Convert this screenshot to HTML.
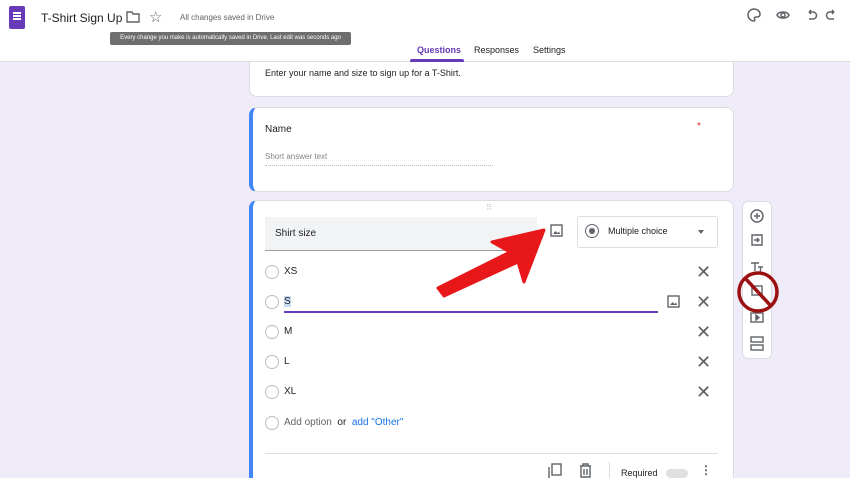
<!DOCTYPE html>
<html style="overflow:hidden;width:850px;height:478px"><head><style>
*{margin:0;padding:0;box-sizing:border-box}
body{width:850px;height:478px;overflow:hidden;background:#f0ebf8;font-family:"Liberation Sans",Arial,sans-serif;position:relative;color:#202124}
.hdr{position:absolute;left:0;top:0;width:850px;height:62px;background:#fff;border-bottom:1px solid #ddd;z-index:5}
.abs{position:absolute}
.card{position:absolute;background:#fff;border-radius:8px;border:1px solid #dadce0}
.x{position:absolute;font-size:18px;color:#5f6368;line-height:18px}
.radio{position:absolute;width:14px;height:14px;border:1px solid #bdbdbd;border-radius:50%}
.opt{position:absolute;font-size:10px;color:#202124}
</style></head><body>
<div class="hdr">
  <div class="abs" style="left:9px;top:6px;width:16px;height:23px;background:#673ab7;border-radius:2px"></div>
  <div class="abs" style="left:13px;top:12px;width:8px;height:1.5px;background:#fff;box-shadow:0 3px 0 #fff,0 6px 0 #fff"></div>
  <div class="abs" style="left:41px;top:11px;font-size:12px;color:#202124">T-Shirt Sign Up</div>
  <svg class="abs" style="left:126px;top:11px" width="14" height="12" viewBox="0 0 14 12"><path d="M1 1h5l1 2h6v8H1z" fill="none" stroke="#5f6368" stroke-width="1.4"/></svg>
  <div class="abs" style="left:149px;top:8px;font-size:15px;color:#5f6368">☆</div>
  <div class="abs" style="left:180px;top:13px;font-size:8px;color:#5f6368">All changes saved in Drive</div>
  <div class="abs" style="left:110px;top:32px;width:241px;height:13px;background:#6e6e6e;border-radius:2px;color:#fff;font-size:6px;line-height:13px;text-align:center">Every change you make is automatically saved in Drive. Last edit was seconds ago</div>
  <div class="abs" style="left:417px;top:45px;font-size:9px;color:#673ab7;font-weight:bold">Questions</div>
  <div class="abs" style="left:410px;top:59px;width:54px;height:3px;background:#673ab7;border-radius:2px 2px 0 0"></div>
  <div class="abs" style="left:474px;top:45px;font-size:9px;color:#202124">Responses</div>
  <div class="abs" style="left:533px;top:45px;font-size:9px;color:#202124">Settings</div>
  <svg class="abs" style="left:746px;top:7px" width="90" height="16" viewBox="0 0 90 16" fill="none" stroke="#5f6368" stroke-width="1.5">
    <path d="M8 2a6 6 0 1 0 0 12c1 0 1-1 .5-2s0-2 1.5-2h2a3 3 0 0 0 2-3C14 4 11 2 8 2z"/>
    <path d="M31 8c2-4 10-4 12 0c-2 4-10 4-12 0z"/><circle cx="37" cy="8" r="2"/>
    <path d="M63 5h4a3 3 0 0 1 0 7h-4M63 5l2-2M63 5l2 2"/>
    <path d="M88 5h-4a3 3 0 0 0 0 7h4M88 5l-2-2M88 5l-2 2"/>
  </svg>
</div>
<div class="card" style="left:249px;top:50px;width:485px;height:47px;border-top:none;border-radius:0 0 8px 8px"></div>
<div class="abs" style="left:265px;top:68px;font-size:9px">Enter your name and size to sign up for a T-Shirt.</div>

<div class="card" style="left:249px;top:107px;width:485px;height:85px;border-left:4px solid #4285f4"></div>
<div class="abs" style="left:265px;top:124px;font-size:10px">Name</div>
<div class="abs" style="left:697px;top:121px;font-size:10px;color:#d93025">*</div>
<div class="abs" style="left:265px;top:152px;font-size:8px;color:#80868b">Short answer text</div>
<div class="abs" style="left:265px;top:165px;width:228px;border-top:1px dotted #bdbdbd"></div>

<div class="card" style="left:249px;top:200px;width:485px;height:290px;border-left:4px solid #4285f4;border-radius:8px 8px 0 0"></div>
<div class="abs" style="left:486px;top:203px;font-size:8px;color:#bbb;letter-spacing:-1px">⠿</div>
<div class="abs" style="left:265px;top:217px;width:272px;height:34px;background:#f1f3f4;border-bottom:1px solid #9e9e9e"></div>
<div class="abs" style="left:275px;top:228px;font-size:10px">Shirt size</div>
<svg class="abs" style="left:550px;top:224px" width="13" height="13" viewBox="0 0 13 13"><rect x="1" y="1" width="11" height="11" fill="none" stroke="#5f6368" stroke-width="1.4"/><path d="M3 10l2.5-3 2 2 1.5-1.5L10 10z" fill="#5f6368"/></svg>
<div class="abs" style="left:577px;top:216px;width:141px;height:32px;border:1px solid #dadce0;border-radius:3px"></div>
<div class="abs" style="left:585px;top:224px;width:14px;height:14px;border:1.5px solid #5f6368;border-radius:50%"></div>
<div class="abs" style="left:589px;top:228px;width:6px;height:6px;background:#5f6368;border-radius:50%"></div>
<div class="abs" style="left:608px;top:226px;font-size:9px">Multiple choice</div>
<div class="abs" style="left:698px;top:230px;border:3px solid transparent;border-top:4px solid #5f6368"></div>

<div class="radio" style="left:265px;top:265px"></div><div class="opt" style="left:284px;top:266px">XS</div><div class="x" style="left:696px;top:263px">✕</div>
<div class="radio" style="left:265px;top:295px"></div><div class="opt" style="left:284px;top:296px;background:#c8dcf5">S</div><div class="x" style="left:696px;top:293px">✕</div>
<div class="abs" style="left:284px;top:311px;width:374px;height:2px;background:#673ab7"></div>
<svg class="abs" style="left:667px;top:295px" width="13" height="13" viewBox="0 0 13 13"><rect x="1" y="1" width="11" height="11" fill="none" stroke="#5f6368" stroke-width="1.4"/><path d="M3 10l2.5-3 2 2 1.5-1.5L10 10z" fill="#5f6368"/></svg>
<div class="radio" style="left:265px;top:325px"></div><div class="opt" style="left:284px;top:326px">M</div><div class="x" style="left:696px;top:323px">✕</div>
<div class="radio" style="left:265px;top:355px"></div><div class="opt" style="left:284px;top:356px">L</div><div class="x" style="left:696px;top:353px">✕</div>
<div class="radio" style="left:265px;top:385px"></div><div class="opt" style="left:284px;top:386px">XL</div><div class="x" style="left:696px;top:383px">✕</div>
<div class="radio" style="left:265px;top:416px"></div><div class="opt" style="left:284px;top:417px;color:#5f6368">Add option <span style="color:#202124">&nbsp;or&nbsp;</span> <span style="color:#1a73e8">add "Other"</span></div>
<div class="abs" style="left:265px;top:453px;width:453px;border-top:1px solid #e0e0e0"></div>
<svg class="abs" style="left:548px;top:463px" width="50" height="15" viewBox="0 0 50 15" fill="none" stroke="#5f6368" stroke-width="1.4"><rect x="4" y="1" width="9" height="11"/><path d="M1 4v11"/><path d="M32 3h11M35 3V1h5v2M33 3v11h9V3M36 6v6M39 6v6"/></svg>
<div class="abs" style="left:609px;top:462px;height:16px;border-left:1px solid #dadce0"></div>
<div class="abs" style="left:621px;top:468px;font-size:9px">Required</div>
<div class="abs" style="left:666px;top:469px;width:22px;height:9px;background:#e0e0e0;border-radius:5px"></div>
<div class="abs" style="left:700px;top:463px;font-size:12px;color:#5f6368;font-weight:bold">⋮</div>

<div class="abs" style="left:742px;top:201px;width:30px;height:158px;background:#fff;border-radius:6px;border:1px solid #dadce0"></div>
<svg class="abs" style="left:749px;top:208px" width="16" height="145" viewBox="0 0 16 145" fill="none" stroke="#5f6368" stroke-width="1.4">
  <circle cx="8" cy="8" r="6"/><path d="M8 5v6M5 8h6"/>
  <path d="M3 27h10v10H3zM5 32h5M8 30l2 2-2 2"/>
  <path d="M2 55h8M6 55v8M9 59h5M11.5 59v5"/>
  <rect x="3" y="78" width="10" height="9"/>
  <rect x="2" y="105" width="12" height="9"/><path d="M7 107l3 2.5-3 2.5z" fill="#5f6368"/>
  <rect x="2" y="129" width="12" height="5"/><rect x="2" y="137" width="12" height="5"/>
</svg>
<svg class="abs" style="left:735px;top:269px" width="46" height="46" viewBox="0 0 46 46"><circle cx="23" cy="23" r="19" fill="none" stroke="#9b1111" stroke-width="3.5"/><path d="M10 9L36 37" stroke="#9b1111" stroke-width="3.5"/></svg>
<svg class="abs" style="left:430px;top:220px" width="120" height="80" viewBox="0 0 120 80"><path d="M8 68L80 32L62 22L114 10L94 62L88 42L14 76Z" fill="#e8171a" stroke="#e8171a" stroke-width="3" stroke-linejoin="round"/></svg>
</body></html>
